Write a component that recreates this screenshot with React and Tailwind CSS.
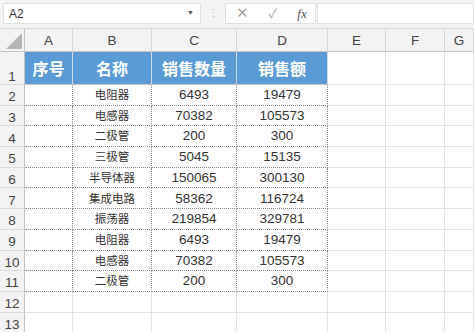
import React from 'react';

const cols = ['A', 'B', 'C', 'D', 'E', 'F', 'G'];
const rows = [
  ['电阻器', '6493', '19479'],
  ['电感器', '70382', '105573'],
  ['二极管', '200', '300'],
  ['三极管', '5045', '15135'],
  ['半导体器', '150065', '300130'],
  ['集成电路', '58362', '116724'],
  ['振荡器', '219854', '329781'],
  ['电阻器', '6493', '19479'],
  ['电感器', '70382', '105573'],
  ['二极管', '200', '300'],
];

const font = { fontFamily: '"Liberation Sans", "Noto Sans CJK SC", sans-serif' };
const cjk = { fontFamily: '"Noto Sans CJK SC", sans-serif' };

const RowHead = ({ n }) => (
  <div className="flex items-end justify-center pb-[1px] bg-[#f3f3f3] border-r border-b border-r-[#c4c4c4] border-b-[#dadada] text-[13.5px] text-[#444] leading-none">
    {n}
  </div>
);

const Blank = () => <div className="border-r border-b border-[#e1e1e1]" />;

const DataCell = ({ children, cn = false }) => (
  <div
    className={`flex items-center justify-center border-r border-b border-dotted border-[#8a8a8a] text-[#333] leading-none ${cn ? 'text-[11.5px]' : 'text-[13.5px]'}`}
    style={cn ? cjk : font}
  >
    {children}
  </div>
);

const HeadCell = ({ children }) => (
  <div
    className="flex items-center justify-center bg-[#5b9bd5] border-r border-b border-r-[#d2dbe4] border-b-[#c8c8c8] text-white font-bold text-[16px] leading-none"
    style={cjk}
  >
    {children}
  </div>
);

export default function App() {
  return (
    <div className="w-[474px] h-[332px] overflow-hidden bg-white" style={font}>
      {/* formula bar */}
      <div className="h-[29px] bg-[#f3f3f3] border-b border-[#d6d6d6] flex items-start pt-[3px] pl-[3px]">
        <div className="w-[198px] h-[21px] bg-white border border-[#e0e0e0] flex items-center justify-between pl-[5px] pr-[6px]">
          <span className="text-[12px] text-[#333]">A2</span>
          <span className="text-[7px] text-[#555]">▼</span>
        </div>
        <div className="w-[24px] h-[21px] flex items-center justify-center text-[#b8b8b8] text-[11px]">⋮</div>
        <div className="w-[91px] h-[21px] bg-white border border-[#e0e0e0] flex items-center text-[#a6a6a6]">
          <span className="w-[30px] ml-[1px] text-center text-[15px] font-light">✕</span>
          <span className="w-[32px] text-center text-[13px]">✓</span>
          <span className="w-[26px] text-center text-[13px] italic text-[#555]" style={{ fontFamily: '"Liberation Serif", serif' }}>
            fx
          </span>
        </div>
        <div className="flex-1 ml-[1px] h-[21px] bg-white border border-[#e0e0e0]" />
      </div>

      {/* sheet grid */}
      <div
        className="grid"
        style={{
          gridTemplateColumns: '25px 48px 79px 85px 91px 58px 59px 1fr',
          gridTemplateRows: '23px 33px repeat(10, 20.7px) 21px 21px',
        }}
      >
        <div className="relative bg-[#f3f3f3] border-r border-b border-[#c4c4c4]">
          <svg className="absolute left-0 top-0" width="24" height="22" viewBox="0 0 24 22">
            <polygon points="22,4 22,20 6,20" fill="#b5b5b5" />
          </svg>
        </div>
        {cols.map((c) => (
          <div
            key={c}
            className="flex items-center justify-center pt-[3px] bg-[#f3f3f3] border-r border-b border-r-[#d6d6d6] border-b-[#c4c4c4] text-[13.5px] text-[#444]"
          >
            {c}
          </div>
        ))}

        <RowHead n={1} />
        <HeadCell>序号</HeadCell>
        <HeadCell>名称</HeadCell>
        <HeadCell>销售数量</HeadCell>
        <HeadCell>销售额</HeadCell>
        <Blank />
        <Blank />
        <Blank />

        {rows.map((r, i) => (
          <React.Fragment key={i}>
            <RowHead n={i + 2} />
            <DataCell />
            <DataCell cn>{r[0]}</DataCell>
            <DataCell>{r[1]}</DataCell>
            <DataCell>{r[2]}</DataCell>
            <Blank />
            <Blank />
            <Blank />
          </React.Fragment>
        ))}

        {[12, 13].map((n) => (
          <React.Fragment key={n}>
            <RowHead n={n} />
            <Blank />
            <Blank />
            <Blank />
            <Blank />
            <Blank />
            <Blank />
            <Blank />
          </React.Fragment>
        ))}
      </div>
    </div>
  );
}
